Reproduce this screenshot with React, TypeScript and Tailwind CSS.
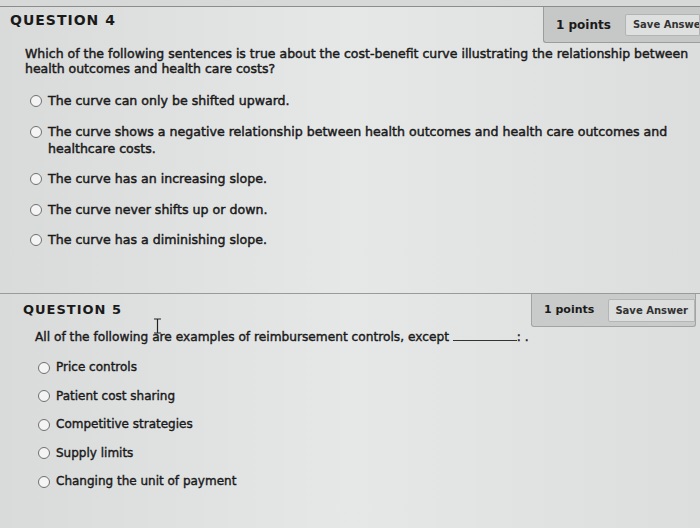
import React from "react";

const Radio = ({ size = 12 }: { size?: number }) => (
  <span
    className="block shrink-0 rounded-full border border-[#6f6f6f] bg-[#f4f4f4]"
    style={{ width: size, height: size }}
  />
);

const q4Options = [
  "The curve can only be shifted upward.",
  "The curve shows a negative relationship between health outcomes and health care outcomes and healthcare costs.",
  "The curve has an increasing slope.",
  "The curve never shifts up or down.",
  "The curve has a diminishing slope.",
];

const q5Options = [
  "Price controls",
  "Patient cost sharing",
  "Competitive strategies",
  "Supply limits",
  "Changing the unit of payment",
];

export default function App() {
  return (
    <div
      className="w-[700px] h-[528px] overflow-hidden bg-gradient-to-r from-[#d9dada] via-[#e6e8e8] to-[#dcdddd] text-[#1a1a1a]"
      style={{ fontFamily: '"DejaVu Sans", Verdana, sans-serif' }}
    >
      <div className="h-[7px] bg-[#d7d8d8] border-b border-[#8c8c8c]" />
      {/* Question 4 */}
      <section className="h-[287px] border-b border-[#9a9a9a]">
        <div className="flex items-start justify-between">
          <h2 className="pl-[10px] pt-[4px] text-[14px] font-bold tracking-[1px] leading-[18px]">
            QUESTION 4
          </h2>
          <div className="flex h-[36px] w-[157px] items-center gap-[14px] rounded-bl-[3px] border-b border-l border-[#9c9c9c] bg-[#c6c7c7] pl-[12px]">
            <span className="text-[12px] font-bold">1 points</span>
            <span className="flex h-[22px] flex-1 items-center overflow-hidden whitespace-nowrap rounded-l-[2px] border border-[#b3b3b3] bg-[#dedfdf] pl-[7px] text-[10px] font-bold text-[#333]">
              Save Answe
            </span>
          </div>
        </div>
        <p className="mt-[3px] pl-[25px] pr-[4px] text-[12.5px] leading-[15px] [-webkit-text-stroke:0.45px_#1a1a1a]">
          Which of the following sentences is true about the cost-benefit curve illustrating the relationship between health outcomes and health care costs?
        </p>
        <ul className="mt-[16px] flex flex-col gap-[13.5px] pl-[30px]">
          {q4Options.map((o) => (
            <li key={o} className="flex items-start gap-[6px]">
              <span className="mt-[3px]">
                <Radio size={12} />
              </span>
              <span className="max-w-[625px] text-[12.6px] leading-[17px] [-webkit-text-stroke:0.45px_#1a1a1a]">
                {o}
              </span>
            </li>
          ))}
        </ul>
      </section>
      {/* Question 5 */}
      <section>
        <div className="flex items-start justify-between">
          <h2 className="pl-[23px] pt-[7px] text-[13px] font-bold tracking-[1px] leading-[18px]">
            QUESTION 5
          </h2>
          <div className="mr-[4px] flex h-[33px] w-[165px] items-center gap-[14px] rounded-b-[3px] border-b border-l border-r border-[#a3a3a3] bg-[#c9caca] pl-[12px]">
            <span className="text-[11px] font-bold">1 points</span>
            <span className="flex h-[23px] flex-1 items-center justify-center rounded-l-[2px] border border-[#b5b5b5] bg-[#dcdddd] text-[10px] font-bold text-[#333]">
              Save Answer
            </span>
          </div>
        </div>
        <p className="relative mt-[3px] pl-[35px] text-[12.2px] leading-[15px] [-webkit-text-stroke:0.4px_#1a1a1a]">
          All of the following are examples of reimbursement controls, except{" "}
          <span className="inline-block w-[64px] border-b border-[#333] align-baseline" />
          : .
          <svg
            className="absolute left-[153px] top-[-12px]"
            width="9"
            height="16"
            viewBox="0 0 9 16"
          >
            <path d="M1 1h7M4.5 1v14M1 15h7" stroke="#222" strokeWidth="1.2" fill="none" />
          </svg>
        </p>
        <ul className="mt-[15px] flex flex-col gap-[13.5px] pl-[38px]">
          {q5Options.map((o) => (
            <li key={o} className="flex items-center gap-[6px]">
              <Radio size={12} />
              <span className="text-[12px] leading-[15px] [-webkit-text-stroke:0.4px_#1a1a1a]">
                {o}
              </span>
            </li>
          ))}
        </ul>
      </section>
    </div>
  );
}
